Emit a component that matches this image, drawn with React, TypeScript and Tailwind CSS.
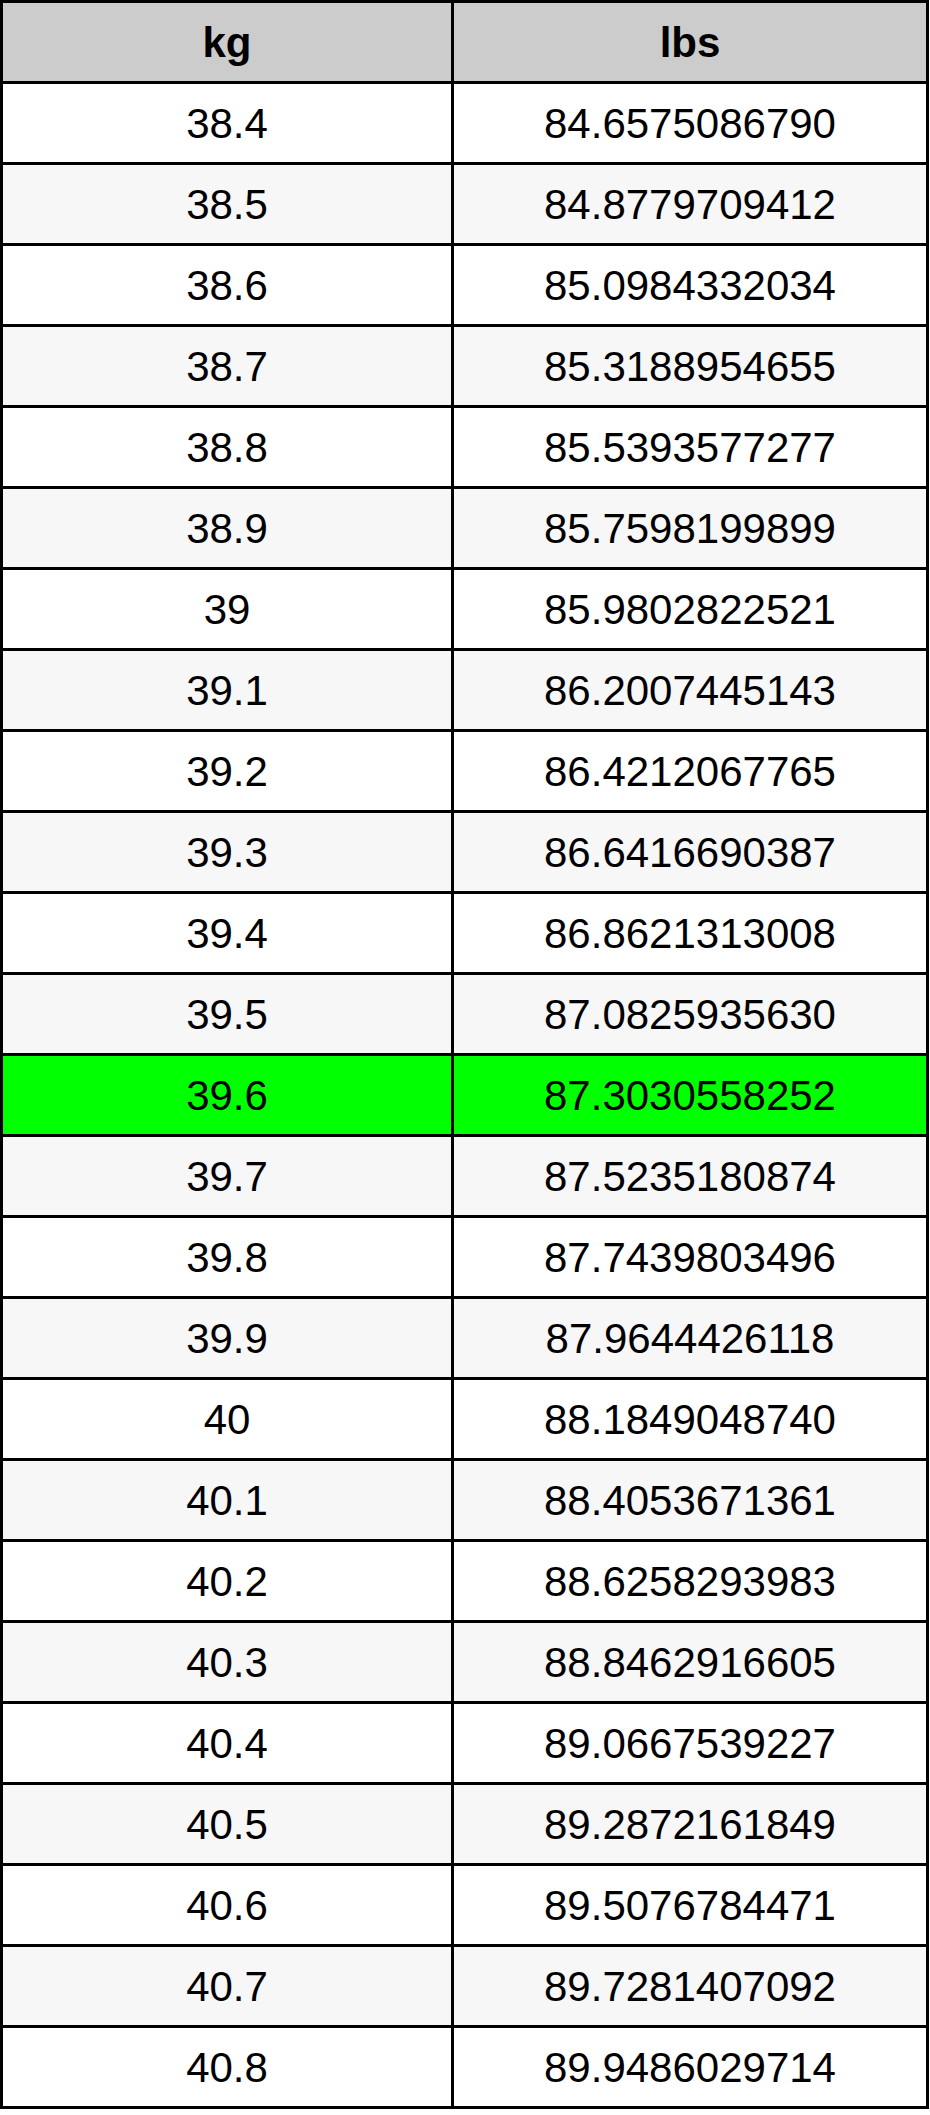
const rows: [string, string][] = [
  ["38.4", "84.6575086790"],
  ["38.5", "84.8779709412"],
  ["38.6", "85.0984332034"],
  ["38.7", "85.3188954655"],
  ["38.8", "85.5393577277"],
  ["38.9", "85.7598199899"],
  ["39", "85.9802822521"],
  ["39.1", "86.2007445143"],
  ["39.2", "86.4212067765"],
  ["39.3", "86.6416690387"],
  ["39.4", "86.8621313008"],
  ["39.5", "87.0825935630"],
  ["39.6", "87.3030558252"],
  ["39.7", "87.5235180874"],
  ["39.8", "87.7439803496"],
  ["39.9", "87.9644426118"],
  ["40", "88.1849048740"],
  ["40.1", "88.4053671361"],
  ["40.2", "88.6258293983"],
  ["40.3", "88.8462916605"],
  ["40.4", "89.0667539227"],
  ["40.5", "89.2872161849"],
  ["40.6", "89.5076784471"],
  ["40.7", "89.7281407092"],
  ["40.8", "89.9486029714"],
];

export default function App() {
  return (
    <div className="bg-white font-['Liberation_Sans',Arial,sans-serif] text-black">
      <div className="w-[929px] border-[3px] border-black">
        {/* header */}
        <div className="flex h-[78px] bg-[#cccccc] text-[42px] font-bold">
          <div className="w-[448px] flex items-center justify-center">kg</div>
          <div className="flex-1 flex items-center justify-center border-l-[3px] border-black">lbs</div>
        </div>
        {rows.map(([kg, lbs], i) => {
          const bg = kg === "39.6" ? "bg-[#00ff00]" : i % 2 === 1 ? "bg-[#f7f7f7]" : "bg-white";
          return (
            <div key={kg} className={`flex h-[81px] border-t-[3px] border-black text-[42px] ${bg}`}>
              <div className="w-[448px] flex items-center justify-center">{kg}</div>
              <div className="flex-1 flex items-center justify-center border-l-[3px] border-black">{lbs}</div>
            </div>
          );
        })}
      </div>
    </div>
  );
}
